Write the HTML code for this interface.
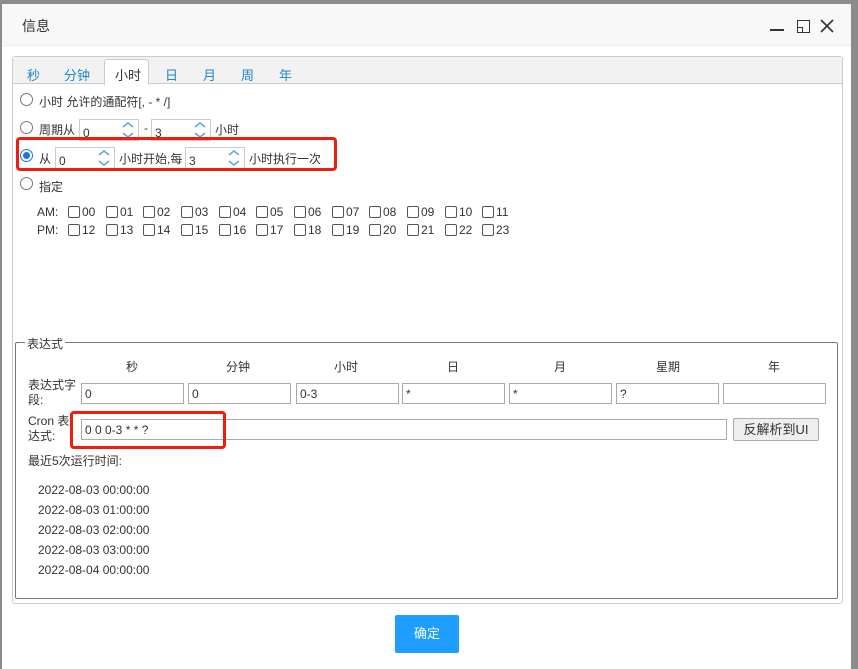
<!DOCTYPE html>
<html><head><meta charset="utf-8"><style>
*{box-sizing:border-box;margin:0;padding:0}
body{width:858px;height:665px;background:#8c8c8c;font-family:"Liberation Sans","Noto Sans CJK SC",sans-serif;font-size:12px;color:#333;position:relative;overflow:hidden}
.a{position:absolute}
.dlg{left:2px;top:4px;width:849px;height:665px;background:#fff}
.hd{left:0;top:0;width:849px;height:42px;background:#f8f8f8;border-bottom:1px solid #eee}
.inp{position:absolute;border:1px solid #aaa;background:#fff;height:21px;font-size:12px;padding:3px 3px;line-height:14px}
.sp{position:absolute;border:1px solid #ccc;background:#fff;height:22px}
.rad{position:absolute;width:13px;height:13px;border:1px solid #777;border-radius:50%;background:#fff}
.cb{position:absolute;white-space:nowrap;font-size:12px;line-height:14px}
.cb i{display:inline-block;width:12px;height:12px;border:1px solid #555;border-radius:2px;vertical-align:-2px;margin-right:2px}
.tab{position:absolute;top:65px;color:#1e88c7;font-size:13px}
.ar{position:absolute}
</style></head><body>
<div class="a dlg">
 <div class="a hd"></div>
 <div class="a" style="left:20px;top:12px;font-size:14px;color:#333">信息</div>
 <div class="a" style="left:768px;top:25px;width:14px;height:2px;background:#333"></div>
 <div class="a" style="left:795px;top:16px;width:13px;height:13px;border:1px solid #333"></div>
 <div class="a" style="left:795px;top:23px;width:6px;height:6px;border:1px solid #333"></div>
 <svg class="a" style="left:818px;top:15px" width="14" height="14"><path d="M1 1L13 13M13 1L1 13" stroke="#333" stroke-width="1.6"/></svg>
</div>
<div class="a" style="left:12px;top:56px;width:831px;height:548px;border:1px solid #ccc;border-radius:3px;background:#fff"></div>
<div class="a" style="left:13px;top:57px;width:829px;height:27px;background:#f2f2f2;border-bottom:1px solid #ccc"></div>
<div class="a" style="left:104px;top:59px;width:45px;height:26px;background:#fff;border:1px solid #ccc;border-bottom:none;border-radius:3px 3px 0 0"></div>
<span class="tab" style="left:27px">秒</span><span class="tab" style="left:64px">分钟</span><span class="tab" style="left:115px;color:#333">小时</span><span class="tab" style="left:165px">日</span><span class="tab" style="left:203px">月</span><span class="tab" style="left:241px">周</span><span class="tab" style="left:279px">年</span>

<div class="rad" style="left:20px;top:93px"></div><div class="a" style="left:39px;top:93px">小时 允许的通配符[, - * /]</div>
<div class="rad" style="left:20px;top:121px"></div><div class="a" style="left:39px;top:121px">周期从</div>
<div class="sp" style="left:79px;top:119px;width:60px"></div><div class="a" style="left:83px;top:126px">0</div>
<svg class="ar" style="left:119px;top:120px" width="18" height="20"><path d="M4 7L9 3L14 7M4 13L9 17L14 13" stroke="#5aa8e0" stroke-width="1.5" fill="none"/></svg>
<div class="a" style="left:144px;top:121px">-</div>
<div class="sp" style="left:151px;top:119px;width:60px"></div><div class="a" style="left:155px;top:126px">3</div>
<svg class="ar" style="left:191px;top:120px" width="18" height="20"><path d="M4 7L9 3L14 7M4 13L9 17L14 13" stroke="#5aa8e0" stroke-width="1.5" fill="none"/></svg>
<div class="a" style="left:215px;top:121px">小时</div>
<div class="rad" style="left:20px;top:149px;border-color:#1a73e8"><div style="margin:2px;width:7px;height:7px;border-radius:50%;background:#1a73e8"></div></div>
<div class="a" style="left:39px;top:150px">从</div>
<div class="sp" style="left:55px;top:147px;width:60px"></div><div class="a" style="left:59px;top:154px">0</div>
<svg class="ar" style="left:95px;top:148px" width="18" height="20"><path d="M4 7L9 3L14 7M4 13L9 17L14 13" stroke="#5aa8e0" stroke-width="1.5" fill="none"/></svg>
<div class="a" style="left:119px;top:150px">小时开始,每</div>
<div class="sp" style="left:185px;top:147px;width:60px"></div><div class="a" style="left:189px;top:154px">3</div>
<svg class="ar" style="left:225px;top:148px" width="18" height="20"><path d="M4 7L9 3L14 7M4 13L9 17L14 13" stroke="#5aa8e0" stroke-width="1.5" fill="none"/></svg>
<div class="a" style="left:249px;top:150px">小时执行一次</div>
<div class="a" style="left:16px;top:137px;width:321px;height:34px;border:3px solid #f01c10;border-radius:4px"></div>
<div class="rad" style="left:20px;top:177px"></div><div class="a" style="left:39px;top:178px">指定</div>
<div class="a" style="left:37px;top:205px">AM:</div>
<div class="a" style="left:37px;top:223px">PM:</div>
<span class="cb" style="left:68px;top:205px"><i></i>00</span><span class="cb" style="left:106px;top:205px"><i></i>01</span><span class="cb" style="left:143px;top:205px"><i></i>02</span><span class="cb" style="left:181px;top:205px"><i></i>03</span><span class="cb" style="left:219px;top:205px"><i></i>04</span><span class="cb" style="left:256px;top:205px"><i></i>05</span><span class="cb" style="left:294px;top:205px"><i></i>06</span><span class="cb" style="left:332px;top:205px"><i></i>07</span><span class="cb" style="left:369px;top:205px"><i></i>08</span><span class="cb" style="left:407px;top:205px"><i></i>09</span><span class="cb" style="left:445px;top:205px"><i></i>10</span><span class="cb" style="left:482px;top:205px"><i></i>11</span>
<span class="cb" style="left:68px;top:223px"><i></i>12</span><span class="cb" style="left:106px;top:223px"><i></i>13</span><span class="cb" style="left:143px;top:223px"><i></i>14</span><span class="cb" style="left:181px;top:223px"><i></i>15</span><span class="cb" style="left:219px;top:223px"><i></i>16</span><span class="cb" style="left:256px;top:223px"><i></i>17</span><span class="cb" style="left:294px;top:223px"><i></i>18</span><span class="cb" style="left:332px;top:223px"><i></i>19</span><span class="cb" style="left:369px;top:223px"><i></i>20</span><span class="cb" style="left:407px;top:223px"><i></i>21</span><span class="cb" style="left:445px;top:223px"><i></i>22</span><span class="cb" style="left:482px;top:223px"><i></i>23</span>

<div class="a" style="left:15px;top:342px;width:823px;height:257px;border:1px solid #777;border-radius:2px"></div>
<div class="a" style="left:25px;top:335px;background:#fff;padding:0 2px">表达式</div>
<div class="a" style="left:126px;top:358px">秒</div><div class="a" style="left:226px;top:358px">分钟</div><div class="a" style="left:334px;top:358px">小时</div><div class="a" style="left:447px;top:358px">日</div><div class="a" style="left:554px;top:358px">月</div><div class="a" style="left:656px;top:358px">星期</div><div class="a" style="left:768px;top:358px">年</div>
<div class="a" style="left:28px;top:378px;line-height:15px">表达式字<br>段:</div>
<div class="inp" style="left:81px;top:383px;width:103px">0</div><div class="inp" style="left:188px;top:383px;width:103px">0</div><div class="inp" style="left:296px;top:383px;width:103px">0-3</div><div class="inp" style="left:402px;top:383px;width:103px">*</div><div class="inp" style="left:509px;top:383px;width:103px">*</div><div class="inp" style="left:616px;top:383px;width:103px">?</div><div class="inp" style="left:723px;top:383px;width:103px"></div>
<div class="a" style="left:28px;top:414px;line-height:15px">Cron 表<br>达式:</div>
<div class="inp" style="left:81px;top:419px;width:646px">0 0 0-3 * * ?</div>
<div class="a" style="left:733px;top:418px;width:86px;height:23px;border:1px solid #aaa;background:#eee;border-radius:2px;font-size:13px;text-align:center;line-height:21px">反解析到UI</div>
<div class="a" style="left:70px;top:411px;width:156px;height:38px;border:3px solid #f01c10;border-radius:4px"></div>
<div class="a" style="left:28px;top:452px">最近5次运行时间:</div>
<div class="a" style="left:38px;top:480px;line-height:20px">2022-08-03 00:00:00<br>2022-08-03 01:00:00<br>2022-08-03 02:00:00<br>2022-08-03 03:00:00<br>2022-08-04 00:00:00</div>
<div class="a" style="left:395px;top:615px;width:64px;height:38px;background:#1e9fff;border-radius:2px;color:#fff;text-align:center;line-height:38px;font-size:13px">确定</div>
</body></html>
